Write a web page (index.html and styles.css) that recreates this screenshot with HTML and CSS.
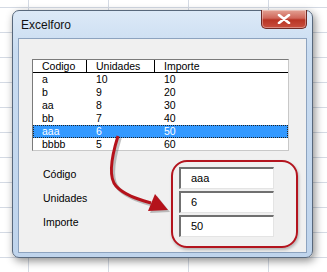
FILE: index.html
```html
<!DOCTYPE html>
<html>
<head>
<meta charset="utf-8">
<link rel="stylesheet" href="styles.css">
</head>
<body>
<div class="window">
  <div class="titlebar">
    <span class="title">Excelforo</span>
    <div class="close"><svg width="14" height="10" viewBox="0 0 14 10"><path d="M2 1 L12 9 M12 1 L2 9" stroke="#fff" stroke-width="2.6" stroke-linecap="round"/></svg></div>
  </div>
  <div class="client">
    <div class="listbox">
      <div class="grid head">
        <div class="cell">Codigo</div><div class="cell">Unidades</div><div class="cell">Importe</div>
      </div>
      <div class="grid row"><div class="cell">a</div><div class="cell">10</div><div class="cell">10</div></div>
      <div class="grid row"><div class="cell">b</div><div class="cell">9</div><div class="cell">20</div></div>
      <div class="grid row"><div class="cell">aa</div><div class="cell">8</div><div class="cell">30</div></div>
      <div class="grid row"><div class="cell">bb</div><div class="cell">7</div><div class="cell">40</div></div>
      <div class="grid row sel"><div class="cell">aaa</div><div class="cell">6</div><div class="cell">50</div></div>
      <div class="grid row"><div class="cell">bbbb</div><div class="cell">5</div><div class="cell">60</div></div>
    </div>
    <div class="form">
      <div class="labels">
        <div class="label">Código</div>
        <div class="label">Unidades</div>
        <div class="label">Importe</div>
      </div>
      <div class="ring">
        <div class="tbox">aaa</div>
        <div class="tbox">6</div>
        <div class="tbox">50</div>
      </div>
    </div>
  </div>
</div>
<svg class="arrow" width="327" height="272" viewBox="0 0 327 272">
  <g transform="translate(2,2)" opacity="0.35">
    <path d="M118 136 C113 152 107 176 116 186 C124 195 138 199 151 203" fill="none" stroke="#555" stroke-width="3.5"/>
    <polygon points="168,210 148,211 155,194" fill="#555"/>
  </g>
  <path d="M118 136 C113 152 107 176 116 186 C124 195 138 199 151 203" fill="none" stroke="#b5121b" stroke-width="3"/>
  <polygon points="168,210 148,211 155,194" fill="#b5121b"/>
</svg>
</body>
</html>
```
FILE: styles.css
```css
html, body {
  margin: 0;
  padding: 0;
}
body {
  width: 327px;
  height: 272px;
  overflow: hidden;
  position: relative;
  background-color: #fff;
  background-image:
    repeating-linear-gradient(to right, transparent 0, transparent 28px, #d4dae4 28px, #d4dae4 29px, transparent 29px, transparent 80px),
    repeating-linear-gradient(to bottom, transparent 0, transparent 7px, #d4dae4 7px, #d4dae4 8px, transparent 8px, transparent 25px);
  background-size: 80px 100%, 100% 25px;
  font-family: "Liberation Sans", Arial, sans-serif;
}
.window {
  position: absolute;
  left: 12px;
  top: 10px;
  width: 301px;
  height: 248px;
  box-sizing: border-box;
  border: 1px solid #58687c;
  border-radius: 7px;
  background: linear-gradient(to bottom, #dce9f7 0, #c9dcf1 40px, #bfd4ec 100%);
  padding: 0 5px 4px 5px;
  display: flex;
  flex-direction: column;
  box-shadow: 2px 3px 8px rgba(0,0,0,0.45);
}
.titlebar {
  height: 27px;
  display: flex;
  align-items: flex-start;
  flex: none;
}
.title {
  font-size: 12px;
  color: #111;
  margin-left: 3px;
  margin-top: 7px;
}
.close {
  margin-left: auto;
  margin-right: 0;
  margin-top: -1px;
  width: 46px;
  height: 19px;
  box-sizing: border-box;
  border: 1px solid #6e2a25;
  border-top: none;
  border-radius: 0 0 5px 5px;
  background: linear-gradient(to bottom, #e3a294 0, #d0675a 45%, #b83424 55%, #c9503f 100%);
  display: flex;
  align-items: center;
  justify-content: center;
  box-shadow: inset 0 0 0 1px rgba(255,255,255,0.35);
}
.client {
  flex: 1;
  background: #f0f0f0;
  border: 1px solid #8da3bf;
  padding: 20px 0 0 13px;
  box-sizing: border-box;
}
.listbox {
  width: 257px;
  height: 92px;
  box-sizing: border-box;
  background: #fff;
  border: 1px solid #7a7a7a;
  border-right-color: #c8c8c8;
  border-bottom-color: #c8c8c8;
  font-size: 10.5px;
  color: #000;
}
.grid {
  display: grid;
  grid-template-columns: 54px 68px 1fr;
}
.head {
  height: 13px;
  box-sizing: border-box;
  border-bottom: 1px solid #000;
  line-height: 12px;
}
.head .cell:nth-child(1), .head .cell:nth-child(2) {
  border-right: 1px solid #000;
}
.cell {
  padding-left: 9px;
  white-space: nowrap;
}
.row {
  height: 13px;
  line-height: 13px;
  box-sizing: border-box;
}
.sel {
  background: #3399ff;
  color: #fff;
  outline: 1px dotted #222;
  outline-offset: -1px;
}
.form {
  display: flex;
  margin-top: 9px;
  margin-left: 11px;
}
.labels {
  width: 128px;
  padding-top: 2px;
  font-size: 10.5px;
  color: #000;
}
.label {
  height: 24px;
  line-height: 24px;
}
.ring {
  width: 127px;
  box-sizing: border-box;
  border: 2px solid #b3141e;
  border-radius: 16px;
  padding: 5px 22px 9px 6px;
  display: flex;
  flex-direction: column;
  gap: 2px;
  box-shadow: 1px 2px 3px rgba(0,0,0,0.25);
}
.tbox {
  height: 22px;
  box-sizing: border-box;
  background: #fff;
  border-top: 2px solid #707070;
  border-left: 2px solid #707070;
  border-right: 1px solid #e4e4e4;
  border-bottom: 1px solid #e4e4e4;
  padding-left: 10px;
  font-size: 11px;
  line-height: 19px;
  color: #000;
}
.arrow {
  position: absolute;
  left: 0;
  top: 0;
  pointer-events: none;
}
```
